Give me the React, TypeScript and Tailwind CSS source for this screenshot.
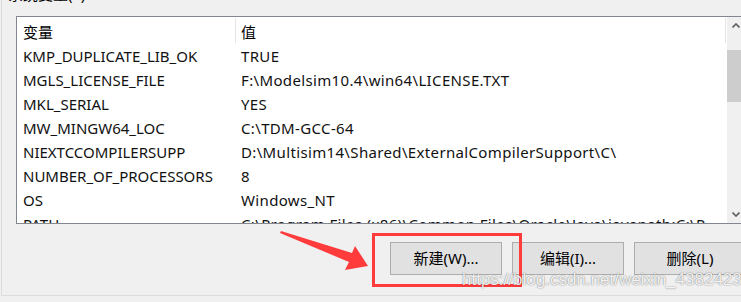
import React from "react";

type EnvVar = {
  name: string;
  value: string;
};

const VARS: EnvVar[] = [
  { name: "KMP_DUPLICATE_LIB_OK", value: "TRUE" },
  { name: "MGLS_LICENSE_FILE", value: "F:\\Modelsim10.4\\win64\\LICENSE.TXT" },
  { name: "MKL_SERIAL", value: "YES" },
  { name: "MW_MINGW64_LOC", value: "C:\\TDM-GCC-64" },
  { name: "NIEXTCCOMPILERSUPP", value: "D:\\Multisim14\\Shared\\ExternalCompilerSupport\\C\\" },
  { name: "NUMBER_OF_PROCESSORS", value: "8" },
  { name: "OS", value: "Windows_NT" },
  { name: "PATH", value: "C:\\Program Files (x86)\\Common Files\\Oracle\\Java\\javapath;C:\\P" },
];

const FONT = "font-['Segoe_UI','Noto_Sans','Noto_Sans_CJK_SC',sans-serif]";

function WinButton({ label }: { label: string }) {
  return (
    <button className="flex h-[33px] w-[112px] shrink-0 items-center justify-center border border-[#adadad] bg-[#e1e1e1] text-[15px] text-black">
      {label}
    </button>
  );
}

export default function App() {
  return (
    <div className={`relative h-[302px] w-[741px] overflow-hidden bg-[#f0f0f0] ${FONT}`}>
      <div className="relative ml-[1px] h-[296px] w-[760px] border-b border-l border-[#dcdcdc] pl-[14px] pt-[16px]">
        <span className="absolute -top-[17px] left-[6px] text-[15px] text-black">系统变量(S)</span>

        <div className="flex h-[208px] w-[729px] border border-[#828790] bg-white">
          <div className="flex-1 overflow-hidden">
            <div className="flex h-[27px] items-center text-[15px] text-black">
              <div className="flex h-full w-[218px] items-center pl-[6px] pt-[3px]">变量</div>
              <div className="mt-[1px] h-[25px] w-px self-start bg-[#e5e5e5]" />
              <div className="flex h-full w-[489px] items-center pl-[5px] pt-[3px]">值</div>
              <div className="mt-[1px] h-[25px] w-px self-start bg-[#e5e5e5]" />
            </div>
            {VARS.map((v) => (
              <div key={v.name} className="flex h-[24px] items-center whitespace-nowrap text-[15px] text-[#111]">
                <div className="w-[219px] pl-[6px]">{v.name}</div>
                <div className="pl-[5px] tracking-[0.35px]">{v.value}</div>
              </div>
            ))}
          </div>

          <div className="flex w-[17px] shrink-0 flex-col bg-[#f0f0f0]">
            <div className="flex h-[17px] items-center justify-center">
              <svg width="8" height="5" viewBox="0 0 8 5">
                <path d="M0.5 4.5 L4 1 L7.5 4.5" fill="none" stroke="#606060" strokeWidth="1.6" />
              </svg>
            </div>
            <div className="mt-[16px] h-[52px] bg-[#cdcdcd]" />
            <div className="flex-1" />
            <div className="flex h-[17px] items-center justify-center">
              <svg width="8" height="5" viewBox="0 0 8 5">
                <path d="M0.5 0.5 L4 4 L7.5 0.5" fill="none" stroke="#606060" strokeWidth="1.6" />
              </svg>
            </div>
          </div>
        </div>

        <div className="ml-[374px] mt-[18px] flex gap-[10px]">
          <WinButton label="新建(W)..." />
          <WinButton label="编辑(I)..." />
          <WinButton label="删除(L)" />
        </div>
      </div>

      {/* annotation overlay */}
      <svg className="pointer-events-none absolute left-0 top-0" width="741" height="302">
        <rect x="373.5" y="234.5" width="147" height="51" fill="none" stroke="#ff3b3b" strokeWidth="3" />
        <polygon points="281,231 352,253 355,246 368,266 345,270 349,262 280,233" fill="#ff3b3b" />
      </svg>

      <div className="pointer-events-none absolute left-[462px] top-[267px] font-['Liberation_Sans',sans-serif] text-[17px] text-white/90 [text-shadow:0_0_1px_rgba(0,0,0,0.45),0_0_2px_rgba(0,0,0,0.25)]">
        https://blog.csdn.net/weixin_43824231
      </div>
    </div>
  );
}
